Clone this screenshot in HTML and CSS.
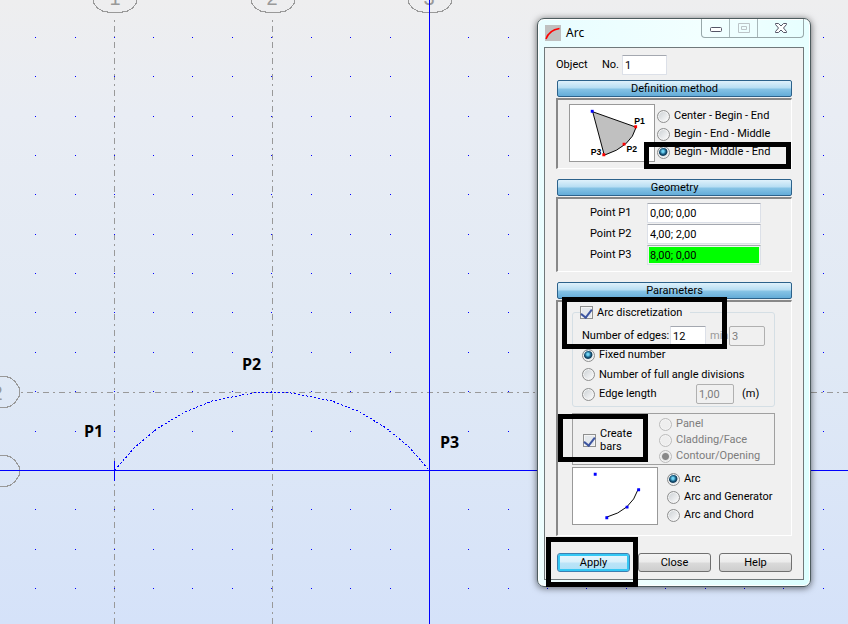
FILE: index.html
```
<!DOCTYPE html>
<html lang="en">
<head>
<meta charset="utf-8">
<title>Arc</title>
<link rel="stylesheet" href="styles.css">
</head>
<body>
<main class="workspace">
  <svg class="drawing" aria-label="Arc drawing">
    <defs>
      <g id="dotrow" fill="#00f">
        <rect x="35" width="1" height="1"/><rect x="75" width="1" height="1"/><rect x="114" width="1" height="1"/><rect x="153" width="1" height="1"/><rect x="192" width="1" height="1"/><rect x="232" width="1" height="1"/><rect x="271" width="1" height="1"/><rect x="311" width="1" height="1"/><rect x="350" width="1" height="1"/><rect x="390" width="1" height="1"/><rect x="429" width="1" height="1"/><rect x="468" width="1" height="1"/><rect x="508" width="1" height="1"/><rect x="547" width="1" height="1"/><rect x="586" width="1" height="1"/><rect x="626" width="1" height="1"/><rect x="665" width="1" height="1"/><rect x="705" width="1" height="1"/><rect x="744" width="1" height="1"/><rect x="783" width="1" height="1"/><rect x="823" width="1" height="1"/>
      </g>
    </defs>
    <g class="axis">
      <path d="M114.500 20V624M272.500 20V624" stroke-dasharray="2 4 6 4"/>
      <path d="M21 392.500H848" stroke-dasharray="2 4 6 4"/>
      <path d="M93.500 0v3l4 5 5 3 5 1h15l5-1 5-3 4-5V0M251.500 0v3l4 5 5 3 5 1h15l5-1 5-3 4-5V0M408.500 0v3l4 5 5 3 5 1h15l5-1 5-3 4-5V0"/>
      <path d="M0 376.500h5l5 1 5 4 4 6v9l-4 6-5 4-5 1H0M0 455.500h5l5 1 5 4 4 6v9l-4 6-5 4-5 1H0"/>
    </g>
    <g class="axis-label">
      <text x="115" y="5">1</text><text x="272" y="5">2</text><text x="429" y="5">3</text><text x="-3" y="400">2</text>
    </g>
    <use href="#dotrow" y="37"/><use href="#dotrow" y="76"/><use href="#dotrow" y="116"/><use href="#dotrow" y="155"/><use href="#dotrow" y="194"/><use href="#dotrow" y="234"/><use href="#dotrow" y="273"/><use href="#dotrow" y="312"/><use href="#dotrow" y="352"/><use href="#dotrow" y="391"/><use href="#dotrow" y="431"/><use href="#dotrow" y="509"/><use href="#dotrow" y="549"/><use href="#dotrow" y="588"/>
    <g class="line">
      <path d="M0 470.500H848M429.500 0V624M114.500 461V481"/>
      <path d="M115 470L135 447 158 428 185 412 212 401 242 395 257 392.500H288L302 395 332 401 360 412 386 428 409 447 429 470" stroke-dasharray="2 2"/>
    </g>
    <g class="point-label"><text x="84" y="437">P1</text><text x="242" y="370">P2</text><text x="440" y="448">P3</text></g>
  </svg>

  <section class="dialog" aria-label="Arc">
    <header class="titlebar">
      <svg class="app-icon" viewBox="0 0 16 16"><rect width="16" height="16" fill="#c0c0c0"/><path d="M1 14Q4 5 14.500 3.500" fill="none" stroke="#f00" stroke-width="1.500"/></svg>
      <h1>Arc</h1>
      <div class="caption-buttons">
        <button type="button" aria-label="Minimize"><svg viewBox="0 0 14 12"><rect x="1.500" y="5.500" width="11" height="4" rx="1" fill="#fff" stroke="#555566"/></svg></button>
        <button type="button" aria-label="Maximize" disabled><svg viewBox="0 0 14 12"><path d="M1.500 1.500h11v9h-11zM4.500 4.500h5v3h-5z" fill="none" stroke="#bcc5c8"/></svg></button>
        <button type="button" class="close" aria-label="Close window"><svg viewBox="0 0 14 12"><path d="M1.500 1.500h3l2.500 2.500 2.500-2.500h3v1L9.500 6l3 3.500v1h-3L7 8l-2.500 2.500h-3v-1L4.500 6l-3-3.500z" fill="#fff" stroke="#555566"/></svg></button>
      </div>
    </header>
    <form class="client">
      <div class="object-row"><span>Object</span><label for="num">No.</label><input id="num" type="text" value="1"></div>

      <button type="button" class="bar">Definition method</button>
      <div class="panel method">
        <svg class="preview" viewBox="0 0 86 58">
          <path d="M23 7L68 23Q63 43 35 52z" fill="#c0c0c0" stroke="#000"/>
          <path fill="#00f" d="M21 5h3v3h-3z"/><path fill="#f00" d="M66 21h3v3h-3zM54 39h3v3h-3zM33 50h3v3h-3z"/>
          <g class="tiny"><text x="66" y="20">P1</text><text x="58" y="49">P2</text><text x="21" y="52">P3</text></g>
        </svg>
        <div class="choices">
          <label><input type="radio" name="method">Center - Begin - End</label>
          <label><input type="radio" name="method">Begin - End - Middle</label>
          <label><input type="radio" name="method" checked>Begin - Middle - End</label>
        </div>
      </div>

      <button type="button" class="bar">Geometry</button>
      <div class="panel geometry">
        <label for="p1">Point P1</label><input id="p1" type="text" value="0,00; 0,00">
        <label for="p2">Point P2</label><input id="p2" type="text" value="4,00; 2,00">
        <label for="p3">Point P3</label><input id="p3" class="active" type="text" value="8,00; 0,00">
      </div>

      <button type="button" class="bar">Parameters</button>
      <div class="panel parameters">
        <fieldset class="discretization">
          <legend><label><input type="checkbox" checked>Arc discretization</label></legend>
          <div class="edges"><label for="edges">Number of edges:</label><input id="edges" type="text" value="12"><label class="dim" for="min">min</label><input id="min" type="text" value="3" disabled></div>
          <label class="fixed"><input type="radio" name="disc" checked>Fixed number</label>
          <label class="full"><input type="radio" name="disc">Number of full angle divisions</label>
          <div class="length"><label><input type="radio" name="disc">Edge length</label><input id="len" aria-label="Length" type="text" value="1,00" disabled><span>(m)</span></div>
        </fieldset>
        <div class="objects">
          <label class="create"><input type="checkbox" checked><span>Create bars</span></label>
          <div class="kinds">
            <label><input type="radio" name="kind" disabled>Panel</label>
            <label><input type="radio" name="kind" disabled>Cladding/Face</label>
            <label><input type="radio" name="kind" checked disabled>Contour/Opening</label>
          </div>
        </div>
        <div class="shape">
          <svg class="preview" viewBox="0 0 86 58"><path d="M34 51Q60 44 67 22" fill="none" stroke="#000"/><path fill="#00f" d="M21 5h3v3h-3zM66 21h3v3h-3zM54 39h3v3h-3zM33 50h3v3h-3z"/></svg>
          <div class="choices">
            <label><input type="radio" name="shape" checked>Arc</label>
            <label><input type="radio" name="shape">Arc and Generator</label>
            <label><input type="radio" name="shape">Arc and Chord</label>
          </div>
        </div>
      </div>

      <footer class="actions"><button type="button" class="default">Apply</button><button type="button">Close</button><button type="button">Help</button></footer>
    </form>
    <i class="mark mark-method"></i><i class="mark mark-edges"></i><i class="mark mark-create"></i><i class="mark mark-apply"></i>
  </section>
</main>
</body>
</html>
```
FILE: styles.css
```
* { box-sizing: border-box; }
body { margin: 0; font: 11px/14px Roboto, "Liberation Sans", Arial, sans-serif; color: #000; }
.workspace { position: relative; min-height: 100vh; overflow: hidden; background: linear-gradient(#eeeeef, #e9edf4 18%, #e0e9f5 58%, #d5e2f9); }
.drawing { position: absolute; inset: 0; width: 100%; height: 100%; shape-rendering: crispEdges; }
.axis { fill: none; stroke: #999; }
.axis-label { font: 20px "Liberation Sans", sans-serif; fill: #999; text-anchor: middle; }
.line { fill: none; stroke: #00f; }
.point-label { font: bold 16px "Open Sans", sans-serif; }

.dialog { position: absolute; left: 537px; top: 18px; width: 274px; padding: 0 6px 6px; border: 1px solid #4d5b5e; border-radius: 7px; background: linear-gradient(100deg, #e8fdff, #f2ffff 45%, #dcffff); box-shadow: inset 0 0 0 1px #fff, 0 1px 7px rgba(0, 0, 0, .6); }
.titlebar { display: flex; align-items: flex-start; height: 28px; }
.app-icon { width: 16px; height: 16px; margin: 6px 0 0 1px; }
h1 { flex: 1; margin: 6px 0 0 5px; font: 12px/16px "Noto Sans", sans-serif; }
.caption-buttons { display: flex; width: 103px; height: 19px; border: 1px solid #98a8aa; border-top: 0; border-radius: 0 0 4px 4px; }
.caption-buttons button { display: flex; flex: 28; align-items: center; justify-content: center; padding: 0; border: 0; border-right: 1px solid #a8b8ba; background: none; }
.caption-buttons .close { flex: 46; border: 0; }
.caption-buttons svg { width: 14px; height: 12px; }

.client { padding: 7px 11px 7px 12px; border: 1px solid #70787a; background: #f0f0f0; }
input, button { font: inherit; color: inherit; margin: 0; }
input[type="text"] { height: 20px; min-width: 0; padding: 0 2px; border: 1px solid #dce0e8; border-top-color: #a4a8b0; background: #fff; border-radius: 1px; }
input[type="text"]:disabled { border-color: #b0b0b0; background: #f0f0f0; color: #7c7c7c; border-radius: 2px; }
input[type="radio"], input[type="checkbox"] { appearance: none; flex: none; width: 13px; height: 13px; border: 1px solid #8e8f8f; background: linear-gradient(135deg, #c9ced2, #fff); box-shadow: inset 0 0 0 1px #f4f4f4; }
input[type="radio"] { border-radius: 50%; }
input[type="radio"]:checked { background: radial-gradient(circle at 45% 40%, #70d4f5 0 1px, #14587e 3px, #103a58 4px, #e4e8ea 5px); }
input[type="radio"]:disabled { border-color: #bcbcbc; background: #eee; }
input[type="radio"]:checked:disabled { background: radial-gradient(circle, #888 0 3px, #e4e4e4 4px); }
input[type="checkbox"]:checked { display: grid; place-items: start center; background: #e4e8ec; }
input[type="checkbox"]:checked::after { content: ""; width: 5px; height: 9px; border: solid #3d55a0; border-width: 0 2px 2px 0; transform: rotate(38deg); }
label { display: flex; align-items: center; }
label input { margin-right: 4px; }

.object-row { display: flex; align-items: center; height: 20px; margin: 0 0 5px -1px; }
.object-row span { width: 46px; }
.object-row label { width: 20px; }
.object-row input { width: 45px; }
.bar { display: block; width: 100%; height: 17px; padding: 0; border: 1px solid #2c628b; border-radius: 2px; background: linear-gradient(#dff1fb, #b8def3 45%, #86c3e5 55%, #64acd8); line-height: 15px; }
.panel { margin: 1px 0 10px -1px; border: 1px solid #fff; border-top: 2px solid #888; border-left: 2px solid #888; }
.method { display: flex; gap: 2px; height: 71px; padding: 4px 0 0 11px; }
.preview { flex: none; width: 86px; height: 58px; border: 1px solid #999; background: #fff; }
.choices { display: flex; flex-direction: column; padding-top: 3px; }
.choices label { height: 18px; }
.tiny { font: bold 9px "Liberation Sans", sans-serif; }
.geometry { display: grid; grid-template-columns: 57px 114px; row-gap: 1px; height: 75px; align-content: start; padding: 4px 0 0 32px; }
.geometry .active { background: #0f0; box-shadow: inset 0 0 0 1px #f0f8f0; }
.parameters { height: 236px; padding: 4px 16px 0 14px; }
.discretization { height: 101px; margin: 0; padding: 0 0 0 9px; border: 1px solid #d5dfe5; border-radius: 3px; min-width: 0; }
legend { height: 13px; padding: 0; margin-left: -2px; }
legend label { height: 13px; width: 110px; }
.edges { display: flex; align-items: center; margin-top: 7px; }
.edges label { width: 88px; }
.edges input { width: 36px; }
.edges .dim { width: 23px; padding-left: 4px; color: #999; }
.fixed { height: 18px; }
.full { height: 21px; }
.length { display: flex; align-items: center; height: 18px; }
.length label { width: 114px; }
.length span { margin-left: 8px; }
#len { width: 38px; }
.objects { display: flex; height: 52px; margin: 6px 0 2px; border: 1px solid #a0a0a0; }
.create { width: 86px; padding: 2px 0 0 10px; line-height: 13px; }
.create span { width: 36px; }
.kinds { color: #7d7d7d; padding-top: 2px; }
.kinds label { height: 16px; }
.shape { display: flex; gap: 9px; }
.actions { display: flex; gap: 8px; margin-top: 17px; }
.actions button { flex: 1; height: 19px; padding: 0; border: 1px solid #707070; border-radius: 3px; background: linear-gradient(#f3f3f3, #ebebeb 48%, #dadada 52%, #cecece); line-height: 17px; }
.actions .default { border-color: #3c7fb1; background: linear-gradient(#e8f6fd, #d8f0fb 48%, #bbe4f8 52%, #ace0f7); box-shadow: inset 0 0 0 2px #35c8f4; }

.mark { position: absolute; border: 5px solid #000; pointer-events: none; }
.mark-method { left: 106px; top: 123px; width: 147px; height: 27px; }
.mark-edges { left: 24px; top: 278px; width: 165px; height: 52px; }
.mark-create { left: 20px; top: 395px; width: 90px; height: 48px; }
.mark-apply { left: 8px; top: 518px; width: 92px; height: 50px; }
```
